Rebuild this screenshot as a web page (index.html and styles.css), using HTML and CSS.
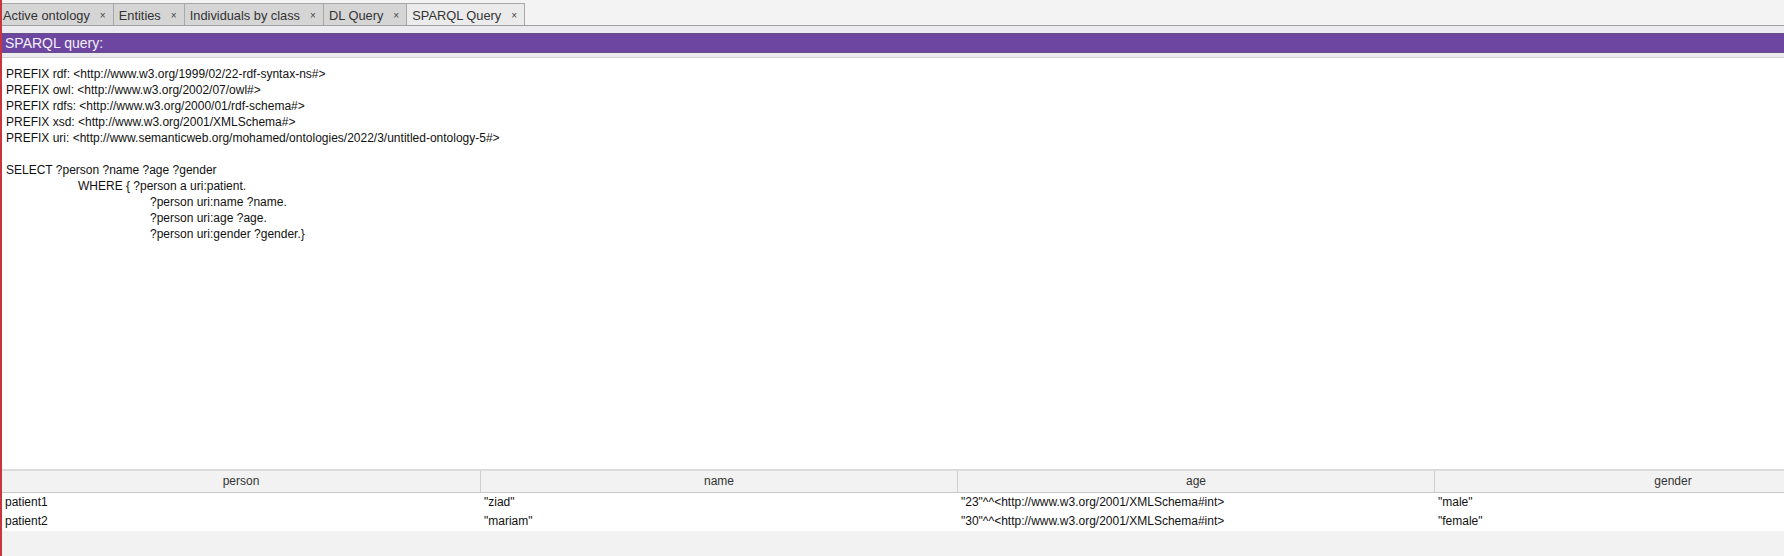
FILE: index.html
```html
<!DOCTYPE html>
<html lang="en">
<head>
  <meta charset="UTF-8">
  <title>SPARQL Query</title>
  <link rel="stylesheet" href="styles.css">
</head>
<body>

  <!-- Workspace tabs -->
  <div class="tab-bar">
    <div class="tab">Active ontology<span class="tab-close">&times;</span></div>
    <div class="tab">Entities<span class="tab-close">&times;</span></div>
    <div class="tab">Individuals by class<span class="tab-close">&times;</span></div>
    <div class="tab">DL Query<span class="tab-close">&times;</span></div>
    <div class="tab tab-active">SPARQL Query<span class="tab-close">&times;</span></div>
  </div>

  <!-- SPARQL view -->
  <div class="view">
    <div class="view-title">SPARQL query:</div>

    <pre class="query">PREFIX rdf: &lt;http://www.w3.org/1999/02/22-rdf-syntax-ns#&gt;
PREFIX owl: &lt;http://www.w3.org/2002/07/owl#&gt;
PREFIX rdfs: &lt;http://www.w3.org/2000/01/rdf-schema#&gt;
PREFIX xsd: &lt;http://www.w3.org/2001/XMLSchema#&gt;
PREFIX uri: &lt;http://www.semanticweb.org/mohamed/ontologies/2022/3/untitled-ontology-5#&gt;

SELECT ?person ?name ?age ?gender
	WHERE { ?person a uri:patient.
		?person uri:name ?name.
		?person uri:age ?age.
		?person uri:gender ?gender.}</pre>

    <!-- Results table -->
    <div class="results">
      <div class="results-table">
        <div class="th">person</div>
        <div class="th">name</div>
        <div class="th">age</div>
        <div class="th">gender</div>

        <div class="td">patient1</div>
        <div class="td">"ziad"</div>
        <div class="td">"23"^^&lt;http://www.w3.org/2001/XMLSchema#int&gt;</div>
        <div class="td">"male"</div>

        <div class="td">patient2</div>
        <div class="td">"mariam"</div>
        <div class="td">"30"^^&lt;http://www.w3.org/2001/XMLSchema#int&gt;</div>
        <div class="td">"female"</div>
      </div>
    </div>
  </div>
</body>
</html>
```

FILE: styles.css
```css
/* Base styles */
* {
  margin: 0;
  padding: 0;
  box-sizing: border-box;
}

body {
  font-family: 'Liberation Sans', Arial, sans-serif;
  background-color: #f3f3f3;
  color: #111;
  height: 556px;
  border-left: 2px solid #c8363d;
  display: flex;
  flex-direction: column;
  overflow: hidden;
}

/* Tab bar */
.tab-bar {
  display: flex;
  height: 25px;
  padding-top: 3px;
}

.tab {
  display: flex;
  align-items: flex-start;
  height: 22px;
  padding: 4px 8px 0 5px;
  font-size: 12.8px;
  line-height: 15px;
  color: #333;
  background-color: #d5d5d5;
  border: 1px solid #a8a8a8;
  border-bottom: none;
  border-left: none;
}

.tab:first-child {
  padding-left: 1px;
}

.tab-active {
  background-color: #ebebeb;
}

.tab-close {
  display: inline-block;
  width: 5px;
  margin-left: 10px;
  font-size: 10px;
  line-height: 15px;
  text-align: center;
  color: #444;
}

/* View */
.view {
  flex: 1;
  display: flex;
  flex-direction: column;
  border-top: 1px solid #a0a0a0;
  padding-top: 7px;
  background-color: #ebebf0;
}

.view-title {
  height: 20px;
  padding-left: 3px;
  font-size: 14px;
  line-height: 18px;
  color: #f4f0fa;
  background-color: #6c46a1;
  border-top: 1px solid #665087;
  border-bottom: 1px solid #665087;
}

/* Query editor */
.query {
  flex: 1;
  margin-top: 4px;
  border-top: 1px solid #d4d4d4;
  background-color: #ffffff;
  padding: 8px 4px 0;
  font-family: 'Liberation Sans', Arial, sans-serif;
  font-size: 12px;
  line-height: 16px;
  color: #111;
  tab-size: 72px;
  white-space: pre;
}

/* Results */
.results {
  flex: none;
  height: 87px;
  border-top: 2px solid #dcdcdc;
  background-color: #f2f2f2;
  overflow: hidden;
}

.results-table {
  display: grid;
  grid-template-columns: 479px 477px 477px 477px;
  grid-template-rows: 22px 19px 19px;
  width: 1910px;
}

.th {
  font-size: 12px;
  line-height: 21px;
  text-align: center;
  color: #333;
  background-color: #f2f2f2;
  border-right: 1px solid #cfcfcf;
  border-bottom: 1px solid #c8c8c8;
}

.td {
  padding-left: 3px;
  font-size: 12px;
  line-height: 19px;
  background-color: #ffffff;
  white-space: nowrap;
}
```
